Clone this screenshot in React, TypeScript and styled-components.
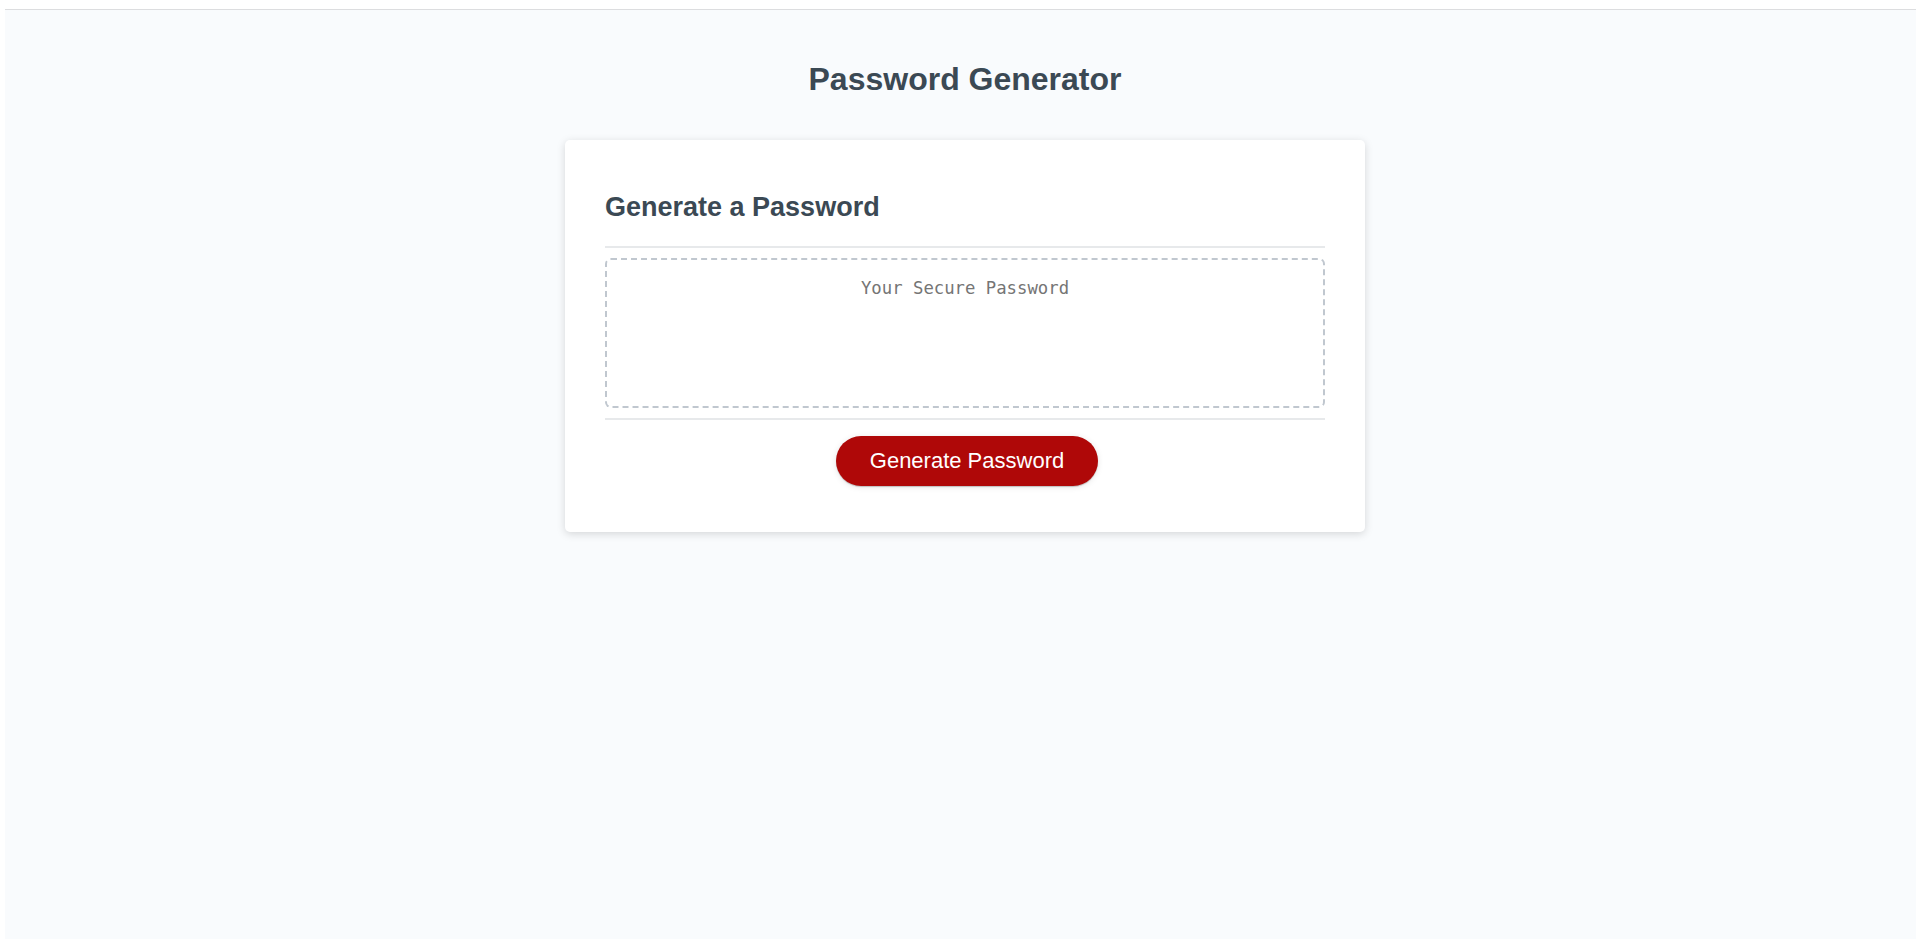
import styled, { createGlobalStyle } from 'styled-components';

const GlobalStyle = createGlobalStyle`
  html, body {
    margin: 0;
    padding: 0;
    background: #ffffff;
  }
  * {
    box-sizing: border-box;
  }
`;

const Wrapper = styled.div`
  margin: 9px 0 0 5px;
  min-height: calc(100vh - 9px);
  padding: 30px 20px 0 29px;
  border-top: 1px solid #dcdddf;
  background-color: #f9fbfd;
  font-family: 'Liberation Sans', Arial, sans-serif;
`;

const Header = styled.header`
  text-align: center;
  padding: 0 20px 20px;
  color: hsl(206, 17%, 28%);

  h1 {
    margin: 21.44px 0;
    font-size: 32px;
    font-weight: 700;
  }
`;

const Card = styled.div`
  max-width: 800px;
  margin: 0 auto;
  padding: 30px 40px;
  background-color: #ffffff;
  border-radius: 5px;
  box-shadow: rgba(0, 0, 0, 0.15) 0 2px 8px 0;
  color: hsl(206, 17%, 28%);
  font-size: 18px;
`;

const Divider = styled.div`
  width: 100%;
  height: 2px;
  background: #e7e9eb;
`;

const CardTitle = styled.h2`
  margin: 22.4px 0;
  font-size: 27px;
  font-weight: 700;
`;

const CardBody = styled.div`
  min-height: 100px;
`;

const PasswordBox = styled.textarea`
  appearance: none;
  display: block;
  width: 100%;
  height: 150px;
  margin: 10px 0;
  padding: 17px 15px 85px;
  border: 2px dashed #c0c7cf;
  border-radius: 6px;
  resize: none;
  overflow: hidden;
  font-family: 'DejaVu Sans Mono', 'Liberation Mono', monospace;
  font-size: 17.3px;
  line-height: 22px;
  text-align: center;
  color: #333;
  outline: none;

  &::placeholder {
    color: #757575;
  }
`;

const CardFooter = styled.div`
  text-align: center;
`;

const Button = styled.button`
  display: inline-block;
  margin: 16px 16px 16px 20px;
  padding: 14px 34px;
  border: none;
  border-radius: 25px;
  background-color: hsl(360, 91%, 36%);
  box-shadow: rgba(0, 0, 0, 0.1) 0 1px 6px 0, rgba(0, 0, 0, 0.2) 0 1px 1px 0;
  color: #ffffff;
  font-family: 'Liberation Sans', Arial, sans-serif;
  font-size: 22px;
  line-height: 22px;
  text-align: center;
  cursor: pointer;
`;

export default function App() {
  return (
    <>
      <GlobalStyle />
      <Wrapper>
        <Header>
          <h1>Password Generator</h1>
        </Header>
        <Card>
          <div>
            <CardTitle>Generate a Password</CardTitle>
            <Divider />
          </div>
          <CardBody>
            <PasswordBox
              readOnly
              placeholder="Your Secure Password"
              aria-label="Generated Password"
            />
          </CardBody>
          <CardFooter>
            <Divider />
            <Button type="button">Generate Password</Button>
          </CardFooter>
        </Card>
      </Wrapper>
    </>
  );
}
